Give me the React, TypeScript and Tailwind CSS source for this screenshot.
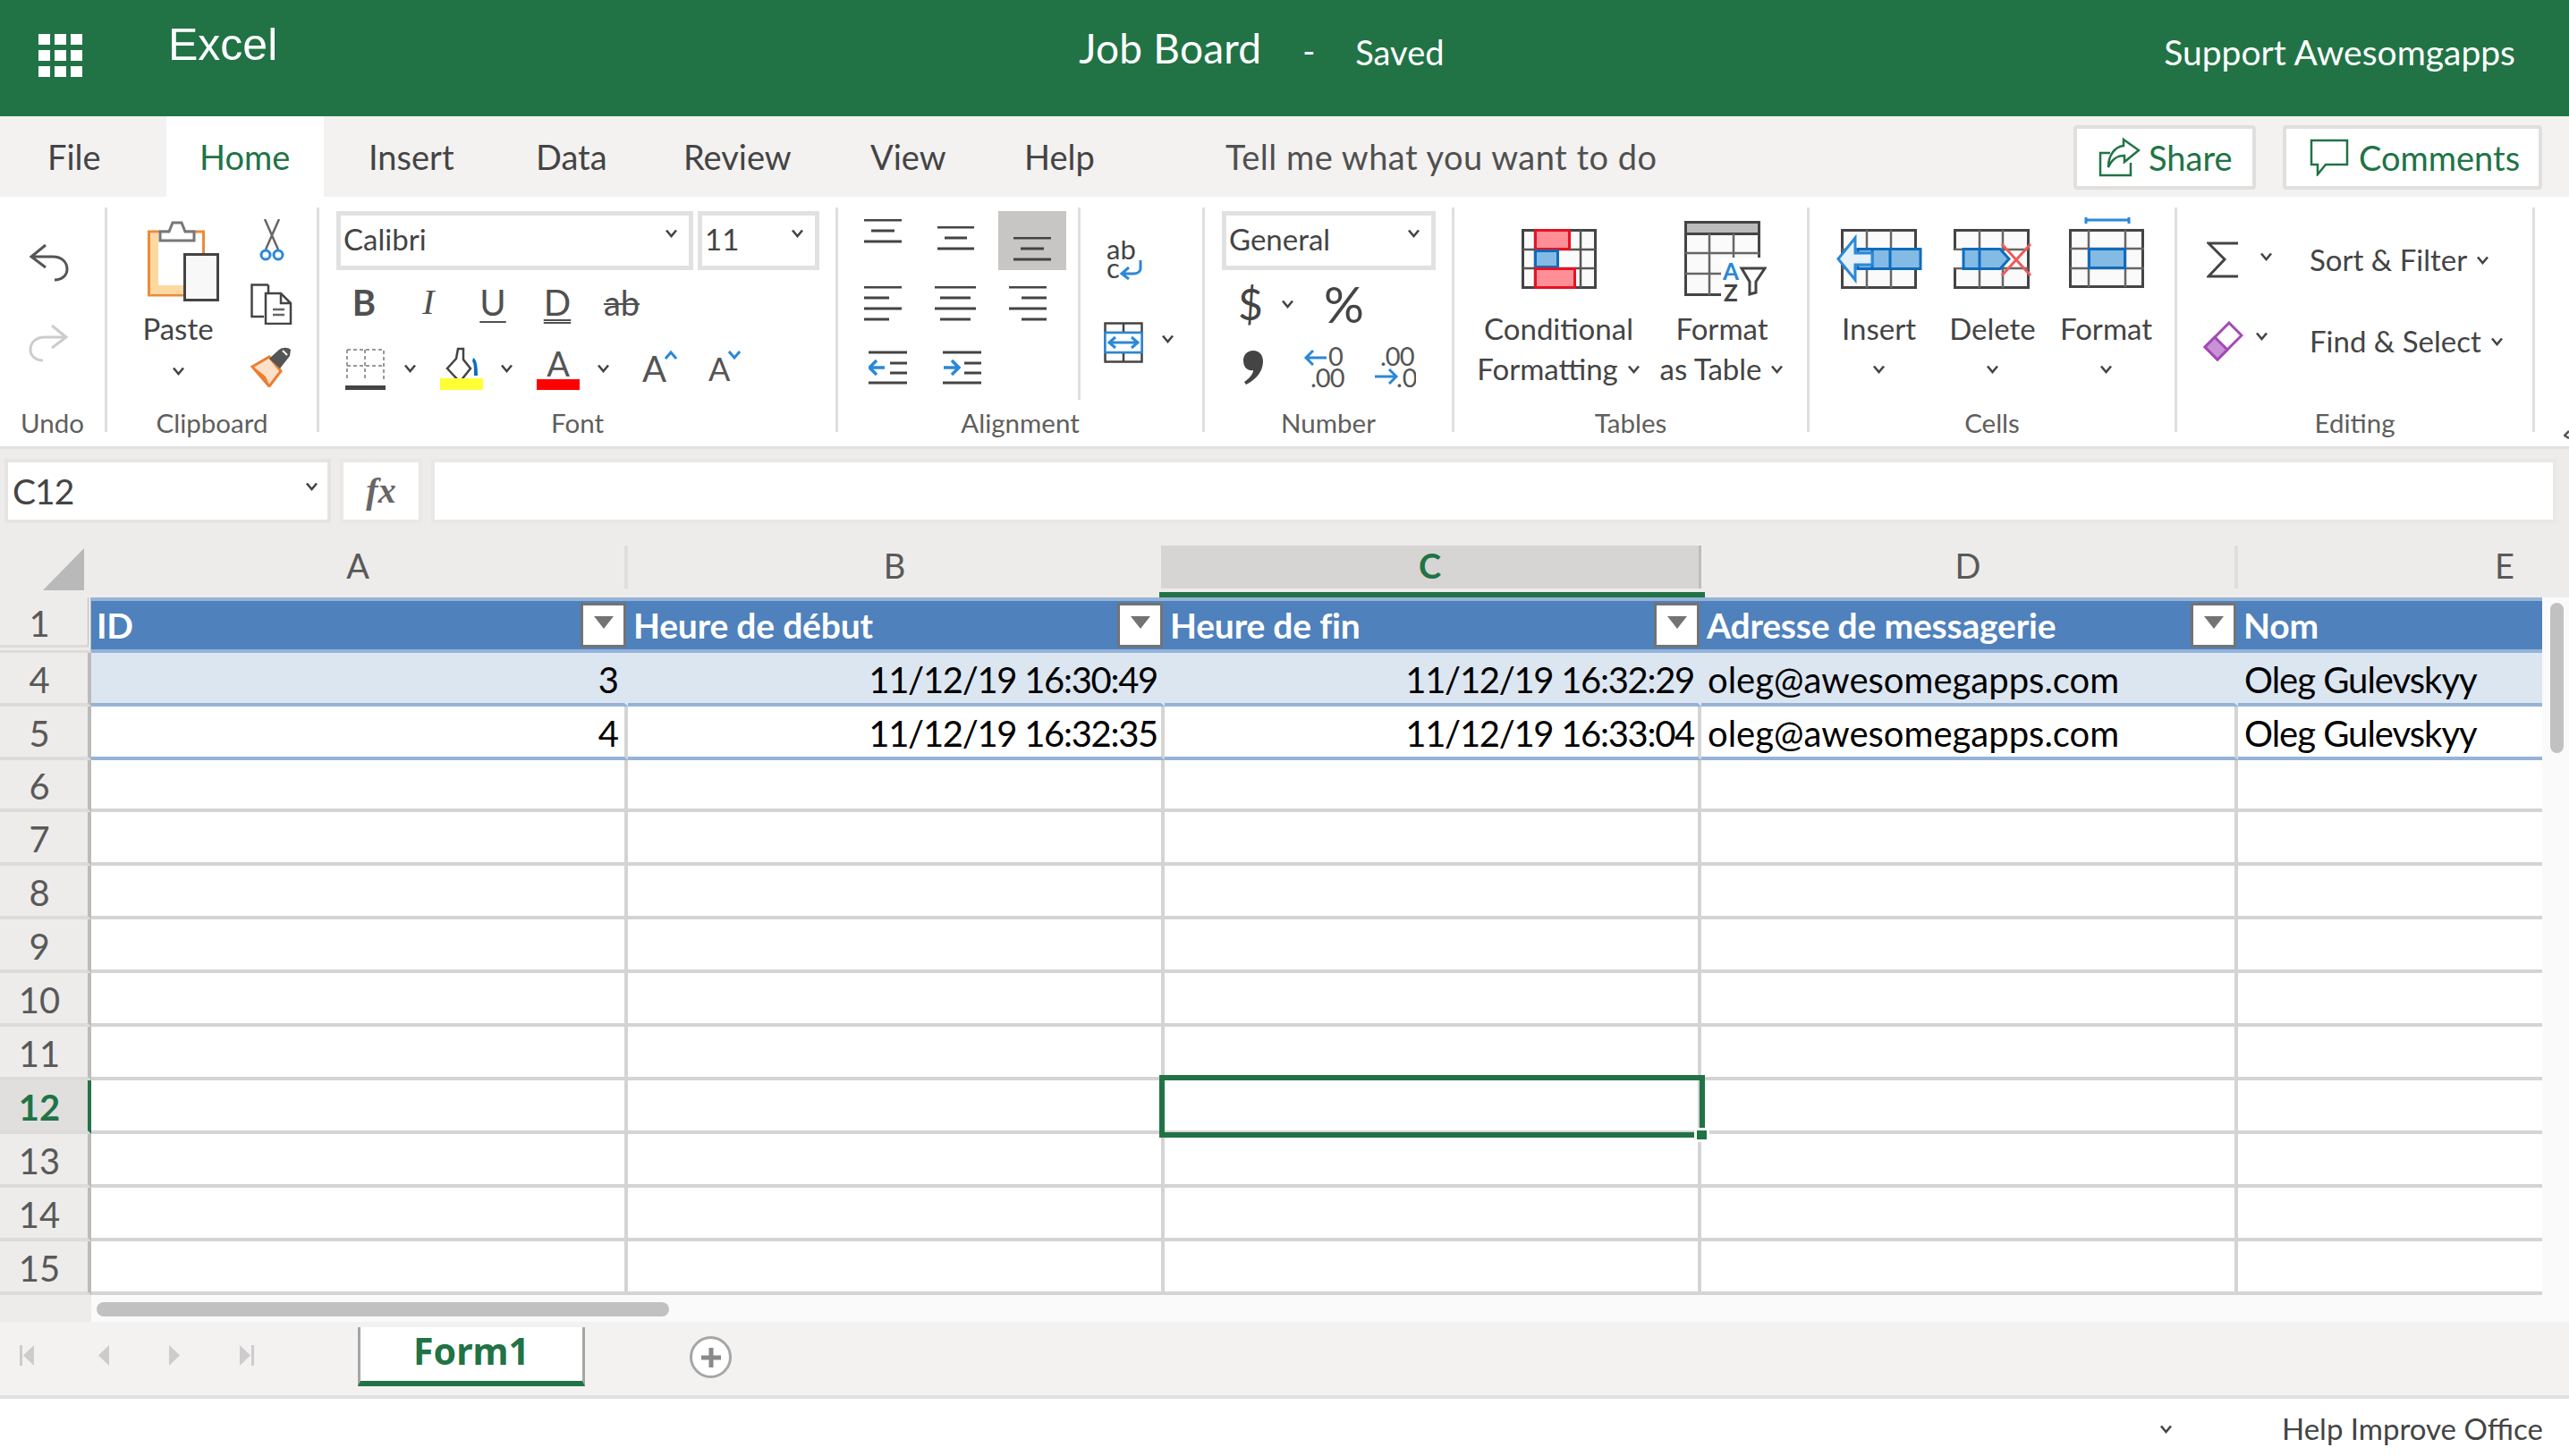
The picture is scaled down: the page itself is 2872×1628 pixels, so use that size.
import React from "react";

const GREEN = "#217346";

function Chev({ color = "#444" }: { color?: string }) {
  return (
    <svg width="15" height="10" viewBox="0 0 15 10" className="shrink-0">
      <path d="M2 1.5 L7.5 8 L13 1.5" fill="none" stroke={color} strokeWidth="2.6" />
    </svg>
  );
}

function Waffle() {
  const pos = [0, 18, 36];
  return (
    <svg width="49" height="48" viewBox="0 0 49 48" className="shrink-0">
      {pos.map((y) => pos.map((x) => <rect key={`${x}-${y}`} x={x} y={y} width="13" height="12" fill="#fff" />))}
    </svg>
  );
}

function UndoIcon({ color, flip }: { color: string; flip?: boolean }) {
  return (
    <svg width="45" height="43" viewBox="0 0 45 43" className={flip ? "-scale-x-100" : ""}>
      <path d="M19 2 L3 15 L19 27 M3 15 H27 C37 15 43 21 43 29 C43 36 37 41 29 41" fill="none" stroke={color} strokeWidth="3" />
    </svg>
  );
}

function PasteIcon() {
  return (
    <svg width="80" height="90" viewBox="0 0 80 90">
      <rect x="1.5" y="12" width="61" height="71" fill="#fff" stroke="#ed8a3a" strokeWidth="3" />
      <path d="M3 14 H12 V72 H40 V82 H3 Z" fill="#fcd9a0" />
      <path d="M14 22 V12 H24 L28 2 H38 L42 12 H52 V22 Z" fill="#fff" stroke="#777" strokeWidth="3" />
      <rect x="41.5" y="37.5" width="37" height="51" fill="#f8f8f8" stroke="#444" strokeWidth="3" />
    </svg>
  );
}

function ScissorsIcon() {
  return (
    <svg width="30" height="47" viewBox="0 0 30 47">
      <path d="M7 0 L22 34 M23 0 L8 34" stroke="#666" strokeWidth="2.5" fill="none" />
      <circle cx="8" cy="40" r="5" fill="#fff" stroke="#2b88d8" strokeWidth="3" />
      <circle cx="22" cy="40" r="5" fill="#fff" stroke="#2b88d8" strokeWidth="3" />
    </svg>
  );
}

function CopyIcon() {
  return (
    <svg width="47" height="46" viewBox="0 0 47 46">
      <path d="M20 1.5 H1.5 V37 H15" fill="none" stroke="#444" strokeWidth="2.5" />
      <path d="M20 10 V1.5" stroke="#444" strokeWidth="2.5" />
      <path d="M17 11 H34 L45 22 V45 H17 Z M34 11 V22 H45" fill="#fff" stroke="#444" strokeWidth="2.5" />
      <path d="M25 29 H38 M25 35 H38" stroke="#666" strokeWidth="2.5" />
    </svg>
  );
}

function PainterIcon() {
  return (
    <svg width="47" height="45" viewBox="0 0 47 45">
      <path d="M2 22 L21 11 L34 27 L21 44 Z" fill="#fbe1c8" stroke="#ed7d31" strokeWidth="3" />
      <path d="M6 24 L17 33 L21 42 L10 30 Z" fill="#ed7d31" />
      <path d="M21 13 L32 3 C36 0 42 0 45 3 L44 10 L33 24 Z" fill="#555" />
      <path d="M36 4 L41 9" stroke="#fff" strokeWidth="2" />
    </svg>
  );
}

function BorderIcon() {
  return (
    <svg width="45" height="47" viewBox="0 0 45 47">
      <path d="M2 2 H43 V37 M2 2 V37 M22 2 V37 M2 20 H43" fill="none" stroke="#999" strokeWidth="2" strokeDasharray="4 3" />
      <rect x="0" y="42" width="45" height="5" fill="#444" />
    </svg>
  );
}

function FillIcon() {
  return (
    <svg width="48" height="48" viewBox="0 0 48 48">
      <path d="M20 2 H26 V14 L34 24 L22 39 L8 24 L18 13 Z" fill="#fff" stroke="#444" strokeWidth="2.5" />
      <path d="M37 12 C41 14 42 22 42 32 L38 32 C38 24 38 18 36 16 Z" fill="#106ebe" />
      <rect x="0" y="35" width="48" height="13" fill="#ffff33" />
    </svg>
  );
}

function AlignLines({ w = 42, lines }: { w?: number; lines: number[][] }) {
  const h = Math.max(...lines.map((l) => l[2])) + 2;
  return (
    <svg width={w} height={h} viewBox={`0 0 ${w} ${h}`} className="shrink-0">
      {lines.map((l, i) => (
        <rect key={i} x={l[0]} y={l[2] - 1.5} width={l[1] - l[0]} height="3" fill="#444" />
      ))}
    </svg>
  );
}

function IndentIcon({ flip }: { flip?: boolean }) {
  return (
    <svg width="43" height="38" viewBox="0 0 43 38">
      <path d="M0 2 H43 M0 36 H43 M24 14 H43 M24 25 H43" stroke="#444" strokeWidth="3" fill="none" />
      {flip ? (
        <path d="M1 19 H16 M10 11 L18 19 L10 27" stroke="#2b88d8" strokeWidth="3.5" fill="none" />
      ) : (
        <path d="M18 19 H3 M9 11 L1 19 L9 27" stroke="#2b88d8" strokeWidth="3.5" fill="none" />
      )}
    </svg>
  );
}

function WrapIcon() {
  return (
    <svg width="44" height="44" viewBox="0 0 44 44" fontFamily="Lato, sans-serif" fontSize="31" fill="#444">
      <text x="0" y="21">ab</text>
      <text x="0" y="42">c</text>
      <path d="M38 22 V31 C38 35 34 37 30 37 H18 M25 30 L17 37 L25 43" fill="none" stroke="#2b88d8" strokeWidth="3" />
    </svg>
  );
}

function MergeIcon() {
  return (
    <svg width="44" height="46" viewBox="0 0 44 46">
      <path d="M1.5 1.5 H42.5 V44.5 H1.5 Z M1.5 12 H42.5 M1.5 34 H42.5 M22 1.5 V12 M22 34 V44.5" fill="#fff" stroke="#444" strokeWidth="2.5" />
      <rect x="1.5" y="12" width="41" height="22" fill="#fff" stroke="#2b88d8" strokeWidth="2.5" />
      <path d="M6 23 H38 M13 17 L6 23 L13 29 M31 17 L38 23 L31 29" fill="none" stroke="#2b88d8" strokeWidth="3" />
    </svg>
  );
}

function CommaIcon() {
  return (
    <svg width="24" height="38" viewBox="0 0 24 38">
      <path d="M12 0 C19 0 23 5 23 12 C23 24 14 33 4 38 L2 35 C8 31 12 26 12 22 C5 23 1 18 1 11 C1 5 5 0 12 0 Z" fill="#444" />
    </svg>
  );
}

function DecimalIcon({ inc }: { inc?: boolean }) {
  return (
    <svg width="46" height="46" viewBox="0 0 46 46" fontFamily="Lato, sans-serif" fontSize="29" fill="#555">
      {inc ? (
        <>
          <text x="6" y="21" letterSpacing="-1">.00</text>
          <text x="24" y="45">.0</text>
          <path d="M0 33 H24 M16 25 L24 33 L16 41" fill="none" stroke="#2b88d8" strokeWidth="3" />
        </>
      ) : (
        <>
          <text x="28" y="21">0</text>
          <text x="8" y="45" letterSpacing="-1">.00</text>
          <path d="M26 12 H3 M11 4 L3 12 L11 20" fill="none" stroke="#2b88d8" strokeWidth="3" />
        </>
      )}
    </svg>
  );
}

function CondFormatIcon() {
  return (
    <svg width="84" height="67" viewBox="0 0 84 67">
      <rect x="1.5" y="1.5" width="81" height="64" fill="#fafafa" stroke="#444" strokeWidth="3" />
      <path d="M1 23 H83 M1 44 H83 M15 1 V66 M66 1 V66" stroke="#555" strokeWidth="2.5" />
      <rect x="15.5" y="1.5" width="38" height="21" fill="#ff8f96" stroke="#e81123" strokeWidth="3" />
      <rect x="15.5" y="24.5" width="25" height="18" fill="#83bbe5" stroke="#0f6cbd" strokeWidth="3" />
      <rect x="15.5" y="44.5" width="44" height="21" fill="#ff8f96" stroke="#e81123" strokeWidth="3" />
    </svg>
  );
}

function TableFormatIcon() {
  return (
    <svg width="92" height="90" viewBox="0 0 92 90" fontFamily="Lato, sans-serif" fontWeight="700">
      <rect x="1.5" y="1.5" width="82" height="81" fill="#fafafa" stroke="#444" strokeWidth="3" />
      <rect x="1.5" y="1.5" width="82" height="13" fill="#bbb" stroke="#444" strokeWidth="3" />
      <path d="M28 14 V83 M55 14 V83 M1 36 H84 M1 59 H84" stroke="#666" strokeWidth="2.5" />
      <rect x="41" y="41" width="51" height="49" fill="#fff" />
      <text x="43" y="66" fontSize="26" fill="#2b88d8">A</text>
      <text x="44" y="90" fontSize="26" fill="#444">Z</text>
      <path d="M64 53 H90 L80 68 V80 L73 82 V68 Z" fill="#fff" stroke="#444" strokeWidth="3" />
    </svg>
  );
}

function InsertCellsIcon() {
  return (
    <svg width="96" height="67" viewBox="0 0 96 67">
      <rect x="6.5" y="1.5" width="82" height="64" fill="#fafafa" stroke="#444" strokeWidth="3" />
      <path d="M34 1 V66 M61 1 V66 M6 23 H89 M6 44 H89" stroke="#666" strokeWidth="2.5" />
      <rect x="24" y="22.5" width="70" height="22" fill="#83bbe5" stroke="#0f6cbd" strokeWidth="3" />
      <path d="M60 22 V45 M40 22 V45" stroke="#0f6cbd" strokeWidth="3" />
      <path d="M21 10 L2 33.5 L21 57 V40 H40 V27 H21 Z" fill="#e4f0fa" stroke="#2b88d8" strokeWidth="3" />
    </svg>
  );
}

function DeleteCellsIcon() {
  return (
    <svg width="88" height="67" viewBox="0 0 88 67">
      <rect x="1.5" y="1.5" width="82" height="64" fill="#fafafa" stroke="#444" strokeWidth="3" />
      <path d="M29 1 V66 M55 1 V66 M1 23 H84 M1 44 H84" stroke="#666" strokeWidth="2.5" />
      <rect x="0" y="24" width="11" height="19" fill="#fff" />
      <path d="M11 22.5 H52 L62 33.5 L52 44.5 H11 Z" fill="#83bbe5" stroke="#0f6cbd" strokeWidth="3" />
      <path d="M29 22 V45" stroke="#0f6cbd" strokeWidth="3" />
      <path d="M54 17 L86 52 M86 17 L54 52" stroke="#f05a5a" strokeWidth="3" />
    </svg>
  );
}

function FormatCellsIcon() {
  return (
    <svg width="84" height="79" viewBox="0 0 84 79">
      <path d="M19 3 H67 M19 0 V7 M67 0 V7" stroke="#2b88d8" strokeWidth="3" fill="none" />
      <rect x="1.5" y="14.5" width="81" height="63" fill="#fafafa" stroke="#444" strokeWidth="3" />
      <path d="M22 14 V78 M63 14 V78 M1 35 H84 M1 57 H84" stroke="#666" strokeWidth="2.5" />
      <rect x="22.5" y="35.5" width="40" height="21" fill="#83bbe5" stroke="#0f6cbd" strokeWidth="3" />
    </svg>
  );
}

function SigmaIcon() {
  return (
    <svg width="36" height="41" viewBox="0 0 36 41">
      <path d="M35 2 H2 L20 20 L2 39 H35" fill="none" stroke="#444" strokeWidth="3" />
    </svg>
  );
}

function EraserIcon() {
  return (
    <svg width="45" height="45" viewBox="0 0 45 45">
      <path d="M29 2 L43 16 L16 43 L2 29 Z" fill="#fff" stroke="#a349b6" strokeWidth="3" />
      <path d="M13 18 L27 32 L16 43 L2 29 Z" fill="#c992d6" stroke="#a349b6" strokeWidth="3" />
    </svg>
  );
}

function ShareIcon() {
  return (
    <svg width="47" height="44" viewBox="0 0 47 44">
      <path d="M13 17 H2 V42 H36 V28" fill="none" stroke={GREEN} strokeWidth="2.5" />
      <path d="M28 2 L45 14 L29 27 V20 C20 20 15 24 11 33 C11 20 18 10 28 9 Z" fill="#fff" stroke={GREEN} strokeWidth="2.5" />
    </svg>
  );
}

function CommentIcon() {
  return (
    <svg width="44" height="42" viewBox="0 0 44 42">
      <path d="M2 2 H42 V29 H18 L9 40 V29 H2 Z" fill="#fff" stroke={GREEN} strokeWidth="2.5" />
    </svg>
  );
}

function NavArrow({ dir, bar }: { dir: "left" | "right"; bar?: boolean }) {
  return (
    <svg width="18" height="23" viewBox="0 0 18 23">
      {dir === "left" ? <path d="M16 0 V23 L4 11.5 Z" fill="#ccc" /> : <path d="M2 0 V23 L14 11.5 Z" fill="#ccc" />}
      {bar && (dir === "left" ? <rect x="0" width="3" height="23" fill="#ccc" /> : <rect x="15" width="3" height="23" fill="#ccc" />)}
    </svg>
  );
}

function FilterButton() {
  return (
    <div className="w-[51px] h-[50px] bg-white border-[3px] border-[#737373] flex items-start justify-center pt-[12px] shrink-0">
      <svg width="22" height="14" viewBox="0 0 22 14">
        <path d="M0 0 H22 L11 14 Z" fill="#737373" />
      </svg>
    </div>
  );
}

function Combo({ w, text }: { w: string; text: string }) {
  return (
    <div className={`${w} h-[66px] border-[5px] border-[#e1e1e1] bg-white flex items-center justify-between pl-[3px] pr-[12px] pb-[2px] text-[33px] text-[#444] shrink-0`}>
      <span>{text}</span>
      <span className="-mt-[14px]">
        <Chev />
      </span>
    </div>
  );
}

function Group({ w, label, children }: { w: string; label: string; children: React.ReactNode }) {
  return (
    <div className={`${w} h-[251px] flex flex-col border-r-[3px] border-[#e1dfdd] shrink-0`}>
      <div className="flex-1 min-h-0 flex">{children}</div>
      <div className="h-[20px] flex items-center justify-center text-[29.5px] text-[#605e5c] whitespace-nowrap">{label}</div>
    </div>
  );
}

function BigButton({ w, topPad, icon, lines, chevOnly }: { w: string; topPad: string; icon: React.ReactNode; lines: React.ReactNode[]; chevOnly?: boolean }) {
  return (
    <div className={`${w} flex flex-col items-center shrink-0 text-[33px] text-[#444]`}>
      <div className={`h-[113px] ${topPad}`}>{icon}</div>
      {lines.map((l, i) => (
        <div key={i} className="h-[45px] flex items-center gap-[10px] whitespace-nowrap">
          {l}
        </div>
      ))}
      {chevOnly && (
        <div className="h-[45px] flex items-center">
          <Chev />
        </div>
      )}
    </div>
  );
}

function Ribbon() {
  return (
    <div className="h-[282px] border-b-[3px] border-[#e1e1e1] bg-white pt-[12px] flex">
      <Group w="w-[120px]" label="Undo">
        <div className="pl-[32px] pt-[40px] flex flex-col gap-[47px]">
          <UndoIcon color="#555" />
          <UndoIcon color="#ccc" flip />
        </div>
      </Group>
      <Group w="w-[237px]" label="Clipboard">
        <div className="w-[158px] flex flex-col items-center pt-[15px] text-[33px] text-[#444]">
          <div className="ml-[12px]">
            <PasteIcon />
          </div>
          <div className="h-[40px] mt-[10px] leading-[40px]">Paste</div>
          <div className="mt-[23px]">
            <Chev />
          </div>
        </div>
        <div className="w-[47px] ml-[2px] flex flex-col items-center pt-[13px]">
          <ScissorsIcon />
          <div className="mt-[25px]">
            <CopyIcon />
          </div>
          <div className="mt-[25px]">
            <PainterIcon />
          </div>
        </div>
      </Group>
      <Group w="w-[580px]" label="Font">
        <div className="flex flex-col pt-[4px]">
          <div className="flex pl-[19px] gap-[5px]">
            <Combo w="w-[399px]" text="Calibri" />
            <Combo w="w-[136px]" text="11" />
          </div>
          <div className="flex pl-[14px] mt-[12px] h-[48px] items-center text-[#505050] text-[40px]">
            <span className="w-[72px] text-center font-bold">B</span>
            <span className="w-[72px] text-center italic font-['Liberation_Serif']">I</span>
            <span className="w-[72px] text-center underline underline-offset-[6px] decoration-2">U</span>
            <span className="w-[72px] text-center underline decoration-double underline-offset-[4px] decoration-2">D</span>
            <span className="w-[72px] text-center line-through text-[38px] decoration-2">ab</span>
          </div>
          <div className="flex items-center pl-[29px] mt-[26px] h-[48px]">
            <BorderIcon />
            <div className="ml-[20px]">
              <Chev />
            </div>
            <div className="ml-[26px]">
              <FillIcon />
            </div>
            <div className="ml-[19px]">
              <Chev />
            </div>
            <div className="ml-[26px] w-[48px] h-[48px] flex flex-col items-center justify-end">
              <span className="text-[38px] leading-[36px] text-[#555]">A</span>
              <div className="w-full h-[13px] bg-[#f00]" />
            </div>
            <div className="ml-[19px]">
              <Chev />
            </div>
            <div className="ml-[36px] w-[40px] flex items-start text-[40px] leading-[44px] text-[#555]">
              A
              <svg width="14" height="10" viewBox="0 0 14 10" className="mt-[2px] -ml-[2px] shrink-0">
                <path d="M1 9 L7 2 L13 9" fill="none" stroke="#2b88d8" strokeWidth="3" />
              </svg>
            </div>
            <div className="ml-[34px] w-[38px] flex items-start text-[36px] leading-[44px] text-[#555]">
              A
              <svg width="14" height="10" viewBox="0 0 14 10" className="mt-[2px] -ml-[2px] shrink-0">
                <path d="M1 1 L7 8 L13 1" fill="none" stroke="#2b88d8" strokeWidth="3" />
              </svg>
            </div>
          </div>
        </div>
      </Group>
      <Group w="w-[410px]" label="Alignment">
        <div className="w-[271px] h-[215px] border-r-[3px] border-[#e1dfdd] flex flex-col pt-[4px]">
          <div className="flex h-[66px] items-start">
            <div className="ml-[29px] mt-[9px]">
              <AlignLines lines={[[0, 42, 1], [8, 34, 13], [0, 42, 25]]} />
            </div>
            <div className="ml-[40px] mt-[17px]">
              <AlignLines lines={[[0, 41, 1], [8, 33, 13], [0, 41, 25]]} />
            </div>
            <div className="ml-[26px] w-[76px] h-[66px] bg-[#c8c6c4] flex items-start justify-center pt-[29px]">
              <AlignLines lines={[[0, 42, 1], [8, 34, 13], [0, 42, 25]]} />
            </div>
          </div>
          <div className="flex mt-[18px] h-[38px]">
            <div className="ml-[29px]">
              <AlignLines lines={[[0, 42, 1], [0, 28, 13], [0, 42, 25], [0, 28, 37]]} />
            </div>
            <div className="ml-[37px]">
              <AlignLines w={46} lines={[[0, 46, 1], [6, 40, 13], [0, 46, 25], [6, 40, 37]]} />
            </div>
            <div className="ml-[37px]">
              <AlignLines lines={[[0, 42, 1], [14, 42, 13], [0, 42, 25], [14, 42, 37]]} />
            </div>
          </div>
          <div className="flex mt-[34px] h-[38px]">
            <div className="ml-[34px]">
              <IndentIcon />
            </div>
            <div className="ml-[40px]">
              <IndentIcon flip />
            </div>
          </div>
        </div>
        <div className="pl-[26px] flex flex-col">
          <div className="mt-[37px] ml-[3px]">
            <WrapIcon />
          </div>
          <div className="flex mt-[47px] items-start">
            <MergeIcon />
            <div className="ml-[20px] mt-[14px]">
              <Chev />
            </div>
          </div>
        </div>
      </Group>
      <Group w="w-[279px]" label="Number">
        <div className="flex flex-col pt-[4px] pl-[19px]">
          <Combo w="w-[239px]" text="General" />
          <div className="flex items-center h-[46px] mt-[15px] text-[#444]">
            <span className="ml-[18px] w-[24px] text-[48px] leading-[46px] text-center">$</span>
            <div className="ml-[24px]">
              <Chev />
            </div>
            <span className="ml-[33px] text-[56px] leading-[46px]">%</span>
          </div>
          <div className="flex items-center h-[46px] mt-[25px]">
            <div className="ml-[23px]">
              <CommaIcon />
            </div>
            <div className="ml-[44px]">
              <DecimalIcon />
            </div>
            <div className="ml-[34px]">
              <DecimalIcon inc />
            </div>
          </div>
        </div>
      </Group>
      <Group w="w-[397px]" label="Tables">
        <div className="flex pl-[10px]">
          <BigButton
            w="w-[213px]"
            topPad="pt-[24px]"
            icon={<CondFormatIcon />}
            lines={["Conditional", <React.Fragment key="f">Formatting<Chev /></React.Fragment>]}
          />
          <BigButton
            w="w-[152px]"
            topPad="pt-[15px] ml-[8px]"
            icon={<TableFormatIcon />}
            lines={["Format", <React.Fragment key="t">as Table<Chev /></React.Fragment>]}
          />
        </div>
      </Group>
      <Group w="w-[411px]" label="Cells">
        <div className="flex pl-[14px]">
          <BigButton w="w-[127px]" topPad="pt-[24px]" icon={<InsertCellsIcon />} lines={["Insert"]} chevOnly />
          <BigButton w="w-[127px]" topPad="pt-[24px]" icon={<DeleteCellsIcon />} lines={["Delete"]} chevOnly />
          <BigButton w="w-[127px]" topPad="pt-[11px]" icon={<FormatCellsIcon />} lines={["Format"]} chevOnly />
        </div>
      </Group>
      <Group w="w-[400px]" label="Editing">
        <div className="flex flex-col text-[33px] text-[#444]">
          <div className="flex items-center h-[41px] mt-[38px] pl-[33px] whitespace-nowrap">
            <SigmaIcon />
            <div className="ml-[23px] -mt-[8px]">
              <Chev />
            </div>
            <span className="ml-[41px]">Sort &amp; Filter</span>
            <div className="ml-[10px]">
              <Chev />
            </div>
          </div>
          <div className="flex items-center h-[45px] mt-[48px] pl-[29px] whitespace-nowrap">
            <EraserIcon />
            <div className="ml-[13px] -mt-[12px]">
              <Chev />
            </div>
            <span className="ml-[46px]">Find &amp; Select</span>
            <div className="ml-[10px]">
              <Chev />
            </div>
          </div>
        </div>
      </Group>
      <div className="flex-1 flex justify-end items-end pb-[8px]">
        <svg width="6" height="10" viewBox="0 0 6 10">
          <path d="M6 1 L1 6 L6 9" fill="none" stroke="#555" strokeWidth="2.5" />
        </svg>
      </div>
    </div>
  );
}

const columns = ["A", "B", "C", "D", "E"];

function ColumnHeader() {
  return (
    <div className="h-[62px] flex overflow-hidden">
      <div className="w-[102px] shrink-0 flex justify-end items-start pt-[7px] pr-[8px]">
        <svg width="46" height="47" viewBox="0 0 46 47">
          <path d="M46 0 V47 H0 Z" fill="#b9b9b9" />
        </svg>
      </div>
      {columns.map((c) => (
        <div key={c} className="w-[600px] shrink-0 flex flex-col pt-[4px] relative">
          <div
            className={
              c === "C"
                ? "h-[48px] pb-[3px] -ml-[4px] bg-[#d6d5d3] border-r-[3px] border-[#bdbdbd] flex items-center justify-center text-[38px] font-bold text-[#217346]"
                : "h-[48px] pb-[3px] border-r-[4px] border-[#dfdedc] flex items-center justify-center text-[38px] text-[#595959]"
            }
          >
            {c}
          </div>
          {c === "C" && <div className="h-[6px] mt-[4px] -ml-[6px] -mr-[4px] bg-[#217346]" />}
        </div>
      ))}
    </div>
  );
}

const headers = ["ID", "Heure de début", "Heure de fin", "Adresse de messagerie", "Nom"];
const dataRows: { n: string; bg: string; values: string[]; line: string }[] = [
  { n: "4", bg: "bg-[#dce6f1]", line: "border-r-transparent", values: ["3", "11/12/19 16:30:49", "11/12/19 16:32:29", "oleg@awesomegapps.com", "Oleg Gulevskyy"] },
  { n: "5", bg: "bg-white", line: "border-r-[#d4d4d4]", values: ["4", "11/12/19 16:32:35", "11/12/19 16:33:04", "oleg@awesomegapps.com", "Oleg Gulevskyy"] },
];
const emptyRows = ["6", "7", "8", "9", "10", "11", "12", "13", "14", "15"];

const cellText = [
  "justify-end pr-[6px]",
  "justify-end pr-[4px] tracking-[-1.3px]",
  "justify-end pr-[4px] tracking-[-1.3px]",
  "pl-[7px]",
  "pl-[7px] tracking-[-1px]",
];

function RowNum({ n, h, active, double }: { n: string; h: string; active?: boolean; double?: boolean }) {
  return (
    <div
      className={`${h} w-[102px] shrink-0 flex items-center justify-center pr-[10px] pt-[4px] border-[#dcdbd9] border-r-[4px] ${
        double ? "border-b-[9px] border-double" : "border-b-[4px]"
      } ${active ? "bg-[#e1dfdd] border-r-[#217346] text-[#217346] font-bold" : "border-r-[#bbbbbb] text-[#595959]"} text-[40px]`}
    >
      {n}
    </div>
  );
}

function Sheet() {
  return (
    <div className="flex h-[780px]">
      <div className="flex-1 min-w-0 overflow-hidden">
        <div className="flex h-[62px] w-max">
          <RowNum n="1" h="h-[62px]" double />
          {headers.map((t) => (
            <div key={t} className="w-[600px] h-[62px] shrink-0 bg-[#4f81bd] border-y-[4px] border-[#95b3d7] flex items-center justify-between pl-[6px] pr-[2px] text-[39px] font-bold text-white tracking-[-0.2px]">
              <span>{t}</span>
              {t !== "Nom" && <FilterButton />}
            </div>
          ))}
        </div>
        {dataRows.map((r) => (
          <div key={r.n} className="flex h-[60px] w-max">
            <RowNum n={r.n} h="h-[60px]" />
            {r.values.map((v, i) => (
              <div
                key={i}
                className={`w-[600px] h-[60px] shrink-0 ${r.bg} border-b-[4px] border-b-[#95b3d7] border-r-[4px] ${r.line} flex items-center pt-[3px] text-[40px] text-black ${cellText[i]}`}
              >
                {v}
              </div>
            ))}
          </div>
        ))}
        {emptyRows.map((n) => (
          <div key={n} className="flex w-max">
            <RowNum n={n} h={n === "6" ? "h-[58px]" : "h-[60px]"} active={n === "12"} />
            {columns.map((c) => (
              <div
                key={c}
                className={`w-[600px] ${n === "6" ? "h-[58px]" : "h-[60px]"} shrink-0 bg-white border-b-[4px] border-r-[4px] border-[#d4d4d4] relative`}
              >
                {n === "12" && c === "C" && (
                  <div className="absolute -left-[6px] -top-[6px] -right-[8px] -bottom-[8px] border-[6px] border-[#217346] z-10">
                    <div className="absolute -right-[8px] -bottom-[8px] w-[11px] h-[10px] bg-[#217346] outline-[3px] outline-white" />
                  </div>
                )}
              </div>
            ))}
          </div>
        ))}
      </div>
      <div className="w-[30px] shrink-0 bg-[#fafafa] pl-[9px] pt-[6px]">
        <div className="w-[15px] h-[168px] rounded-full bg-[#c1c1c1]" />
      </div>
    </div>
  );
}

export default function App() {
  return (
    <div className="w-[2872px] h-[1628px] overflow-hidden bg-white font-[Lato,sans-serif]">
      <div className="h-[130px] bg-[#217346] flex text-white">
        <div className="ml-[43px] pt-[38px]">
          <Waffle />
        </div>
        <div className="ml-[96px] pt-[21px] text-[50px] leading-[58px] font-['Liberation_Sans']">Excel</div>
        <div className="ml-[896px] pt-[28px] text-[46px] leading-[52px] w-[250px] tracking-[0.2px]">Job Board</div>
        <div className="pt-[32px] text-[38px] leading-[48px] w-[59px]">-</div>
        <div className="pt-[34px] text-[38px] leading-[48px]">Saved</div>
        <div className="ml-auto pr-[60px] pt-[34px] text-[39px] leading-[48px]">Support Awesomgapps</div>
      </div>

      <div className="h-[90px] bg-[#f3f2f1] flex items-center text-[38px] text-[#444]">
        <div className="w-[186px] pl-[53px]">File</div>
        <div className="w-[176px] h-full bg-white pl-[37px] flex items-center text-[#217346]">Home</div>
        <div className="ml-[50px] w-[187px]">Insert</div>
        <div className="w-[165px]">Data</div>
        <div className="w-[209px]">Review</div>
        <div className="w-[172px]">View</div>
        <div className="w-[225px]">Help</div>
        <div className="text-[#505050] tracking-[0.5px]">Tell me what you want to do</div>
        <div className="ml-auto flex gap-[30px] pr-[30px] mt-[2px]">
          <div className="w-[204px] h-[72px] bg-white border-[4px] border-[#e1dfdd] rounded-[4px] flex items-center pl-[24px] gap-[9px] text-[#217346]">
            <ShareIcon />
            <span>Share</span>
          </div>
          <div className="w-[290px] h-[72px] bg-white border-[4px] border-[#e1dfdd] rounded-[4px] flex items-center pl-[26px] gap-[11px] text-[#217346]">
            <CommentIcon />
            <span>Comments</span>
          </div>
        </div>
      </div>

      <Ribbon />

      <div className="bg-[#edecea]">
        <div className="h-[104px] pt-[11px] pl-[5px] pr-[14px] flex">
          <div className="w-[365px] h-[72px] bg-white border-[4px] border-[#e5e4e2] flex items-center justify-between pl-[5px] pr-[10px] text-[39px] tracking-[-1px] text-[#444]">
            <span>C12</span>
            <span className="-mt-[10px]">
              <Chev />
            </span>
          </div>
          <div className="ml-[10px] w-[92px] h-[72px] bg-white border-[4px] border-[#e9e8e6] flex items-center justify-center text-[40px] text-[#666] italic font-bold font-['Liberation_Serif']">
            fx
          </div>
          <div className="ml-[10px] flex-1 h-[72px] bg-white border-[4px] border-[#e9e8e6]" />
        </div>
        <ColumnHeader />
        <Sheet />
        <div className="h-[30px] flex">
          <div className="w-[102px]" />
          <div className="flex-1 bg-[#fafafa] pl-[6px] pt-[8px]">
            <div className="w-[640px] h-[16px] rounded-full bg-[#c1c1c1]" />
          </div>
        </div>
      </div>

      <div className="h-[86px] bg-[#f3f2f1] border-b-[4px] border-[#e1e1e1] flex items-start">
        <div className="pl-[22px] pt-[26px]">
          <NavArrow dir="left" bar />
        </div>
        <div className="pl-[66px] pt-[26px]">
          <NavArrow dir="left" />
        </div>
        <div className="pl-[63px] pt-[26px]">
          <NavArrow dir="right" />
        </div>
        <div className="pl-[61px] pt-[26px]">
          <NavArrow dir="right" bar />
        </div>
        <div className="ml-[116px] mt-[6px] w-[254px] h-[66px] bg-white border-x-[3px] border-[#a6a6a6] border-b-[6px] border-b-[#217346] flex items-start justify-center text-[41px] leading-[52px] font-bold text-[#217346] font-['Noto_Sans']">
          Form1
        </div>
        <div className="ml-[117px] mt-[16px] w-[47px] h-[47px] rounded-full bg-white border-[3px] border-[#a6a6a6] flex items-center justify-center">
          <svg width="26" height="26" viewBox="0 0 26 26">
            <path d="M13 2 V24 M2 13 H24" stroke="#8a8a8a" strokeWidth="5" />
          </svg>
        </div>
      </div>

      <div className="h-[62px] flex items-center pt-[6px] text-[33px] text-[#444]">
        <div className="ml-[2414px]">
          <Chev />
        </div>
        <span className="ml-[122px]">Help Improve Office</span>
      </div>
    </div>
  );
}
